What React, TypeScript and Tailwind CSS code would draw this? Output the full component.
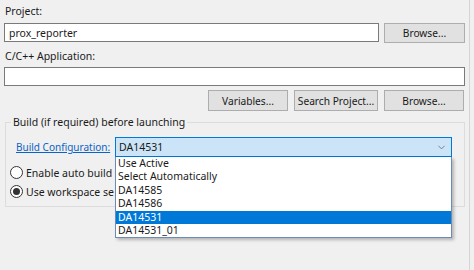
import { ChevronDown } from 'lucide-react'

const options = ['Use Active', 'Select Automatically', 'DA14585', 'DA14586', 'DA14531', 'DA14531_01']
const selected = 'DA14531'

function Button({ label, className }: { label: string; className: string }) {
  return (
    <button className={`flex h-[20px] items-center justify-center whitespace-nowrap border border-[#adadad] bg-[#e1e1e1] text-[#1a1a1a] ${className}`}>
      {label}
    </button>
  )
}

function Radio({ label, checked }: { label: string; checked?: boolean }) {
  return (
    <div className="flex h-[19px] items-center gap-[3px]">
      <span className="flex h-[13px] w-[13px] shrink-0 items-center justify-center rounded-full border border-[#333] bg-white">
        {checked && <span className="h-[7px] w-[7px] rounded-full bg-[#333]" />}
      </span>
      <span className="w-[88px] overflow-hidden whitespace-nowrap text-[10.5px]">{label}</span>
    </div>
  )
}

export default function App() {
  return (
    <div className="h-[270px] w-[474px] overflow-hidden bg-[#f0f0f0] font-['Noto_Sans',sans-serif] text-[10.2px] leading-[16px] text-[#1a1a1a]">
      <div className="flex h-full w-[470px] flex-col border-r border-[#d5d5d5] pl-[4px] pr-[4px] pt-[3px]">
        <div className="h-[20px] pl-[1px] text-[10.5px]">Project:</div>
        <div className="flex gap-[5px]">
          <div className="flex h-[19px] w-[375px] items-center border border-[#7a7a7a] bg-white pl-[4px] text-[10.5px]">prox_reporter</div>
          <Button label="Browse..." className="w-[81px]" />
        </div>
        <div className="mt-[5px] h-[19px] pl-[1px] text-[10.5px]">C/C++ Application:</div>
        <div className="h-[19px] w-[461px] border border-[#7a7a7a] bg-white" />
        <div className="mt-[4px] flex justify-end gap-[6px] pr-[1px]">
          <Button label="Variables..." className="h-[21px] w-[80px]" />
          <Button label="Search Project..." className="h-[21px] w-[84px]" />
          <Button label="Browse..." className="h-[21px] w-[80px]" />
        </div>
        <div className="relative mt-[11px] ml-[1px] h-[85px] w-[460px] border border-[#dcdcdc]">
          <div className="absolute -top-[9px] left-[5px] whitespace-nowrap bg-[#f0f0f0] px-[2px] text-[10.5px]">Build (if required) before launching</div>
          <div className="flex items-center pt-[14px] pl-[10px]">
            <span className="w-[99px] whitespace-nowrap text-[10px] text-[#0b63c5] underline">Build Configuration:</span>
            <div className="relative w-[337px]">
              <div className="flex h-[20px] items-center justify-between border border-[#0078d7] bg-[#cce4f7] pl-[3px] pr-[4px] text-[10.5px]">
                <span>DA14531</span>
                <ChevronDown size={11} strokeWidth={1.5} className="text-[#555]" />
              </div>
              <div className="absolute left-0 top-[20px] z-10 w-[337px] border border-[#6e8cb0] border-t-0 bg-white text-[10.5px] shadow-[2px_2px_3px_rgba(0,0,0,0.25)]">
                {options.map((o) => (
                  <div
                    key={o}
                    className={`h-[13.4px] whitespace-nowrap pl-[2px] leading-[13.4px] ${o === selected ? 'bg-[#0078d7] text-white' : ''}`}
                  >
                    {o}
                  </div>
                ))}
              </div>
            </div>
          </div>
          <div className="mt-[6px] flex flex-col pl-[4px]">
            <Radio label="Enable auto build" />
            <Radio label="Use workspace settings" checked />
          </div>
        </div>
      </div>
    </div>
  )
}
